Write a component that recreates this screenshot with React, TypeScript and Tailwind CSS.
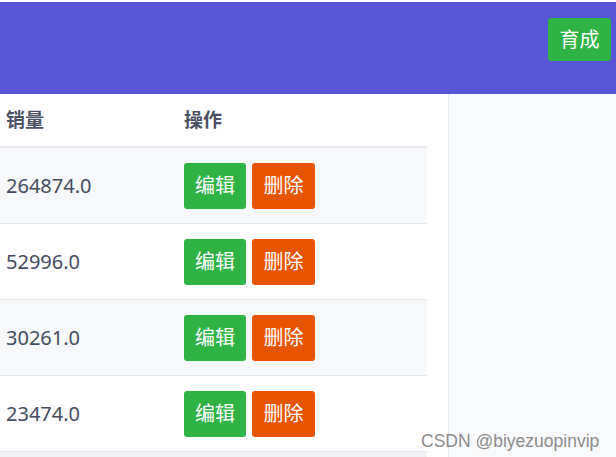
import React from "react";

type Row = {
    sales: string;
};

const rows: Row[] = [
    { sales: "264874.0" },
    { sales: "52996.0" },
    { sales: "30261.0" },
    { sales: "23474.0" },
];

const font = "font-['Noto_Sans','Noto_Sans_CJK_SC',sans-serif]";

const App: React.FC = () => {
    return (
        <div className={`relative w-[616px] h-[457px] overflow-hidden bg-white ${font}`}>
            <div className="h-[2px] bg-white" />

            <div className="h-[92px] bg-[#5856d6] flex justify-end items-start pt-[16px] pr-[5px]">
                <button className="w-[63px] h-[43px] rounded-[3px] bg-[#2fb344] text-white text-[20px] leading-none">
                    育成
                </button>
            </div>

            <div className="flex h-[363px]">
                <div className="w-[427px] shrink-0">
                    <div className="h-[54px] flex items-center border-b-2 border-[#e6e7eb] text-[19px] font-bold text-[#4a5163]">
                        <div className="w-[184px] pl-[6px]">销量</div>
                        <div>操作</div>
                    </div>

                    {rows.map((row, i) => (
                        <div
                            key={i}
                            className={`h-[76px] flex items-center border-b border-[#e6e7eb] ${
                                i % 2 === 0 ? "bg-[#f7f8fa]" : "bg-white"
                            }`}
                        >
                            <div className="w-[184px] pl-[6px] text-[20px] text-[#444c5e]">{row.sales}</div>
                            <div className="flex gap-[6px]">
                                <button className="w-[62px] h-[46px] rounded-[3px] bg-[#2fb344] text-white text-[20px] leading-none">
                                    编辑
                                </button>
                                <button className="w-[63px] h-[46px] rounded-[3px] bg-[#e65400] text-white text-[20px] leading-none">
                                    删除
                                </button>
                            </div>
                        </div>
                    ))}

                    <div className="h-[10px] bg-[#f1f2f6]" />
                </div>

                <div className="w-[21px] shrink-0 bg-white" />

                <div className="flex-1 border-l border-[#e6e7eb] bg-[#f8f9fb]" />
            </div>

            <div className="absolute left-[421px] top-[428px] text-[17.5px] text-[#8c8c8c] font-['Liberation_Sans',sans-serif]">
                CSDN @biyezuopinvip
            </div>
        </div>
    );
};

export default App;
